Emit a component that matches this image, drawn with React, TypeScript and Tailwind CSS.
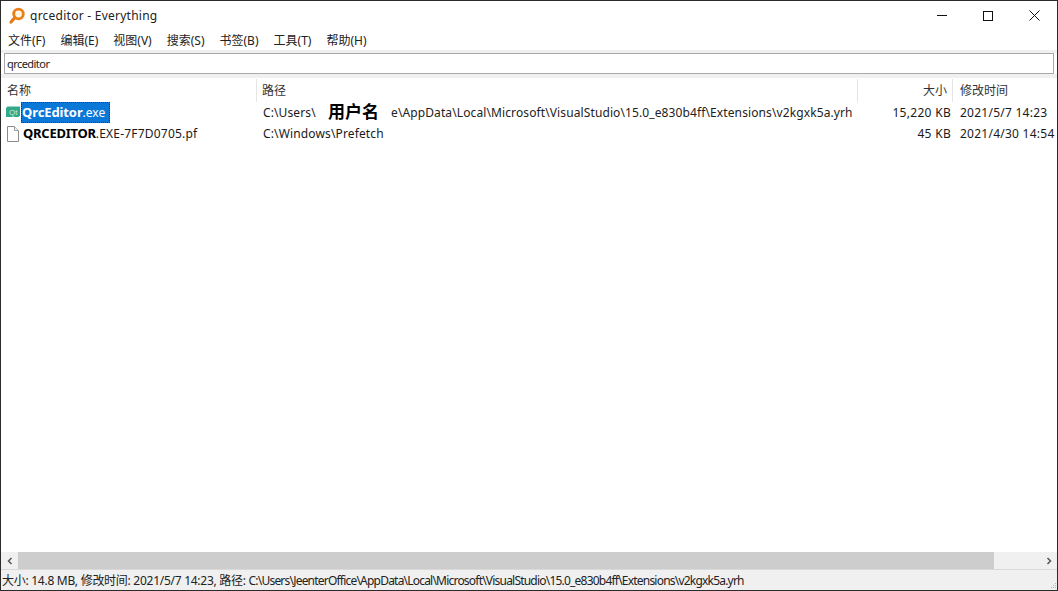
const cjk = "font-['Noto_Sans','Noto_Sans_CJK_SC',sans-serif]";
const menus = ["文件(F)", "编辑(E)", "视图(V)", "搜索(S)", "书签(B)", "工具(T)", "帮助(H)"];

function Logo() {
  return (
    <svg width="18" height="18" viewBox="0 0 18 18" className="shrink-0">
      <line x1="3" y1="15" x2="7" y2="10.5" stroke="#e8761a" strokeWidth="3.2" strokeLinecap="round" />
      <circle cx="10.5" cy="7" r="4.8" fill="#fff6e6" stroke="#ea7f16" strokeWidth="2.8" />
    </svg>
  );
}

function QtIcon() {
  return (
    <svg width="16" height="16" viewBox="0 0 16 16" className="shrink-0">
      <path d="M2.5 1.5H15V10.5L13.5 12H1V3Z" fill="#34a98a" />
      <text x="4" y="9.5" fontSize="8" fill="#bfe8da" fontFamily="Liberation Sans, sans-serif">Qt</text>
    </svg>
  );
}

function FileIcon() {
  return (
    <svg width="16" height="16" viewBox="0 0 16 16" className="shrink-0">
      <path d="M2.5 0.5H9.5L13.5 4.5V15.5H2.5Z" fill="#fdfdfd" stroke="#8a8a8a" />
      <path d="M9.5 0.5V4.5H13.5" fill="#eeeeee" stroke="#a0a0a0" />
    </svg>
  );
}

export default function App() {
  return (
    <div className={`${cjk} flex h-[591px] w-[1058px] flex-col overflow-hidden border border-[#2b2b2b] bg-white text-[12px] text-[#1a1a1a]`}>
      <div className="flex h-[29px] shrink-0 items-center">
        <div className="ml-[7px] flex items-center gap-[4px]">
          <Logo />
          <span className="text-[12px] tracking-[0.25px] text-[#222]">qrceditor - Everything</span>
        </div>
        <div className="ml-auto flex items-center">
          <div className="flex h-[29px] w-[46px] items-center justify-center">
            <div className="h-px w-[10px] bg-[#111]" />
          </div>
          <div className="flex h-[29px] w-[46px] items-center justify-center">
            <div className="h-[10px] w-[10px] border border-[#111]" />
          </div>
          <div className="flex h-[29px] w-[46px] items-center justify-center">
            <svg width="11" height="11" viewBox="0 0 11 11">
              <path d="M0.5 0.5L10.5 10.5M10.5 0.5L0.5 10.5" stroke="#111" />
            </svg>
          </div>
        </div>
      </div>
      <div className="flex h-[20px] shrink-0 items-center gap-[15px] pl-[7px] pt-[2px] text-[#222]">
        {menus.map((m) => (
          <span key={m} className="whitespace-nowrap">{m}</span>
        ))}
      </div>
      <div className="h-[3px] shrink-0 bg-[#f0f0f0]" />
      <div className="ml-[3px] mr-[3px] flex h-[21px] shrink-0 items-center border border-[#a9a9a9] bg-white pl-[2px] pt-[2px] text-[11px] tracking-[-0.55px] text-[#222]">
        qrceditor
      </div>
      <div className="h-[4px] shrink-0 bg-[#f0f0f0]" />
      <div className="flex h-[24px] shrink-0 items-center pt-px text-[#333]">
        <div className="flex h-full w-[256px] items-center border-r border-[#e5e5e5] pl-[6px]">名称</div>
        <div className="flex h-full w-[601px] items-center border-r border-[#e5e5e5] pl-[5px]">路径</div>
        <div className="flex h-full w-[95px] items-center justify-end border-r border-[#e5e5e5] pr-[5px]">大小</div>
        <div className="flex h-full flex-1 items-center pl-[7px]">修改时间</div>
      </div>
      <div className="flex min-h-0 flex-1 flex-col">
        <div className="flex h-[21px] items-center">
          <div className="flex w-[256px] items-center pl-[4px]">
            <QtIcon />
            <span className="border border-dotted border-[#0b3d6e] bg-[#0a78d7] pr-[4px] leading-[18px] text-white">
              <b className="text-[13px] tracking-[-0.1px]">QrcEditor</b>.exe
            </span>
          </div>
          <div className="flex w-[601px] items-center whitespace-nowrap pl-[6px] tracking-[0.11px]">
            <span className="w-[65px]">C:\Users\</span>
            <span className="w-[63px] -translate-y-px text-[17px] font-bold leading-[18px] tracking-normal text-black">用户名</span>
            <span className="text-[#222]">e\AppData\Local\Microsoft\VisualStudio\15.0_e830b4ff\Extensions\v2kgxk5a.yrh</span>
          </div>
          <div className="w-[95px] pr-[2px] text-right tracking-[0.3px]">15,220 KB</div>
          <div className="flex-1 whitespace-nowrap pl-[7px] tracking-[0.25px]">2021/5/7 14:23</div>
        </div>
        <div className="flex h-[21px] items-center">
          <div className="flex w-[256px] items-center pl-[4px]">
            <FileIcon />
            <span className="pl-[2px] tracking-[0.2px]">
              <b className="text-[13px] tracking-[-0.25px] text-black">QRCEDITOR</b>.EXE-7F7D0705.pf
            </span>
          </div>
          <div className="w-[601px] whitespace-nowrap pl-[6px] tracking-[0.14px]">C:\Windows\Prefetch</div>
          <div className="w-[95px] pr-[2px] text-right tracking-[0.3px]">45 KB</div>
          <div className="flex-1 whitespace-nowrap pl-[7px] tracking-[0.25px]">2021/4/30 14:54</div>
        </div>
      </div>
      <div className="flex h-[17px] shrink-0 items-center bg-[#f0f0f0]">
        <div className="flex h-full w-[17px] items-center justify-center">
          <svg width="8" height="8" viewBox="0 0 8 8">
            <path d="M5.5 1L2.5 4L5.5 7" fill="none" stroke="#555" strokeWidth="1.5" />
          </svg>
        </div>
        <div className="h-full w-[976px] bg-[#cdcdcd]" />
        <div className="flex-1" />
        <div className="flex h-full w-[17px] items-center justify-center">
          <svg width="8" height="8" viewBox="0 0 8 8">
            <path d="M2.5 1L5.5 4L2.5 7" fill="none" stroke="#555" strokeWidth="1.5" />
          </svg>
        </div>
      </div>
      <div className="relative flex h-[21px] shrink-0 items-center whitespace-nowrap border-t border-[#d9d9d9] bg-[#f0f0f0] pl-px pt-px text-[#222]">
        <span className="tracking-[-0.27px]">大小: 14.8 MB, 修改时间: 2021/5/7 14:23, 路径:&nbsp;</span>
        <span className="tracking-[-0.79px]">C:\Users\JeenterOffice\AppData\Local\Microsoft\VisualStudio\15.0_e830b4ff\Extensions\v2kgxk5a.yrh</span>
        <svg width="8" height="8" viewBox="0 0 8 8" className="absolute bottom-0 right-0">
          <path d="M6 1h1v1H6zM4 3h1v1H4zM6 3h1v1H6zM2 5h1v1H2zM4 5h1v1H4zM6 5h1v1H6z" fill="#b5b5b5" />
        </svg>
      </div>
    </div>
  );
}
